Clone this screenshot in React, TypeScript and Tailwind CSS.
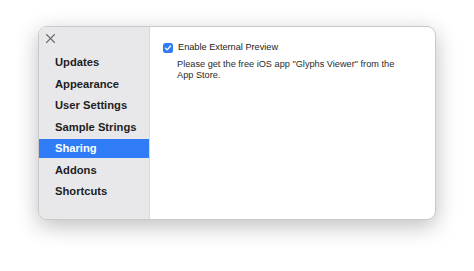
import React from 'react';

const items = ['Updates', 'Appearance', 'User Settings', 'Sample Strings', 'Sharing', 'Addons', 'Shortcuts'];

export default function App() {
  const selected = 'Sharing';
  return (
    <div
      className="w-[474px] h-[271px] bg-white pt-[26px] pl-[38px]"
      style={{ fontFamily: '"Liberation Sans", Arial, sans-serif' }}
    >
      <div className="flex w-[398px] h-[194px] rounded-[9px] overflow-hidden border border-[#c9c9cb] bg-white shadow-[0_6px_22px_rgba(0,0,0,0.26)]">
        {/* sidebar */}
        <div className="flex flex-col w-[111px] shrink-0 bg-[#e8e8ea] border-r border-[#dadadc]">
          <div className="h-[26px] pl-[6px] pt-[6px]">
            <svg width="11" height="11" viewBox="0 0 11 11" className="text-[#6b6b6e]">
              <path d="M1.5 1.5 L9.5 9.5 M9.5 1.5 L1.5 9.5" stroke="currentColor" strokeWidth="1.1" strokeLinecap="round" />
            </svg>
          </div>
          <div className="flex flex-col gap-[2.5px]">
            {items.map((item) => (
              <div
                key={item}
                className={
                  'h-[19px] flex items-center pl-[16px] text-[11.2px] font-bold ' +
                  (item === selected ? 'bg-[#2f7cf6] text-white' : 'text-[#1d1d1f]')
                }
              >
                {item}
              </div>
            ))}
          </div>
        </div>
        {/* content */}
        <div className="flex-1 pl-[13px] pt-[14px] text-[#222]">
          <div className="flex items-center gap-[5px] text-[9.2px]">
            <div className="w-[10px] h-[10px] rounded-[2.5px] bg-[#2f7cf6] flex items-center justify-center">
              <svg width="8" height="8" viewBox="0 0 8 8">
                <path d="M1.5 4.2 L3.2 5.9 L6.5 2" stroke="white" strokeWidth="1.3" fill="none" strokeLinecap="round" strokeLinejoin="round" />
              </svg>
            </div>
            <span>Enable External Preview</span>
          </div>
          <p className="mt-[4px] pl-[14px] w-[240px] text-[9.2px] leading-[11px] text-[#2a2a2a]">
            Please get the free iOS app "Glyphs Viewer" from the App Store.
          </p>
        </div>
      </div>
    </div>
  );
}
